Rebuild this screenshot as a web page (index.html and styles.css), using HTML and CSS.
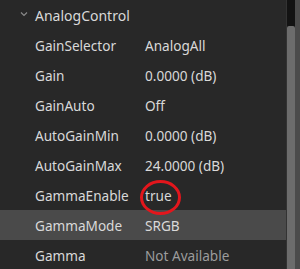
FILE: index.html
```html
<!DOCTYPE html>
<html>
<head>
  <title>AnalogControl</title>
  <link rel="stylesheet" href="styles.css">
</head>
<body>
  <div class="panel">
    <div class="tree">
      <div class="row group">
        <span class="arrow">
          <svg width="8" height="6" viewBox="0 0 8 6"><polyline points="1,1.5 4,4.5 7,1.5" fill="none" stroke="#8a8a8a" stroke-width="1.2"/></svg>
        </span>
        <span class="name">AnalogControl</span>
      </div>
      <div class="row"><span class="key">GainSelector</span><span class="val">AnalogAll</span></div>
      <div class="row"><span class="key">Gain</span><span class="val">0.0000 (dB)</span></div>
      <div class="row"><span class="key">GainAuto</span><span class="val">Off</span></div>
      <div class="row"><span class="key">AutoGainMin</span><span class="val">0.0000 (dB)</span></div>
      <div class="row"><span class="key">AutoGainMax</span><span class="val">24.0000 (dB)</span></div>
      <div class="row"><span class="key">GammaEnable</span><span class="val marked">true<span class="ring"></span></span></div>
      <div class="row selected"><span class="key">GammaMode</span><span class="val">SRGB</span></div>
      <div class="row"><span class="key">Gamma</span><span class="val off">Not Available</span></div>
    </div>
    <div class="scrollbar">
      <div class="thumb"></div>
    </div>
  </div>
</body>
</html>
```

FILE: styles.css
```css
html, body {
  margin: 0;
  height: 100%;
  background: #282828;
}

.panel {
  display: flex;
  height: 269px;
  overflow: hidden;
  font-family: "Noto Sans", "Open Sans", sans-serif;
  font-size: 13.6px;
  color: #d9d9d9;
}

.tree {
  flex: 1;
  border-right: 1px solid #333;
}

.row {
  display: flex;
  align-items: center;
  height: 30px;
  padding-left: 35px;
}
.row.group { padding-left: 20px; }
.row.group .name { font-size: 14px; }
.row.selected { background: #4a4a4a; }

.arrow {
  display: flex;
  width: 15px;
  margin-top: -2px;
}

.key { width: 110px; }

.val.off { color: #9c9c9c; }

.val.marked { position: relative; }

.ring {
  position: absolute;
  z-index: 1;
  left: -5px;
  top: -6px;
  width: 35px;
  height: 29px;
  border: 3.5px solid #e3161c;
  border-radius: 50%;
}

.scrollbar {
  width: 8px;
  padding-top: 26px;
  background: #131313;
  border-right: 5px solid #4b4b4b;
}

.thumb {
  height: 300px;
  background: #6c6c6c;
  border-radius: 2px 2px 0 0;
}
```
